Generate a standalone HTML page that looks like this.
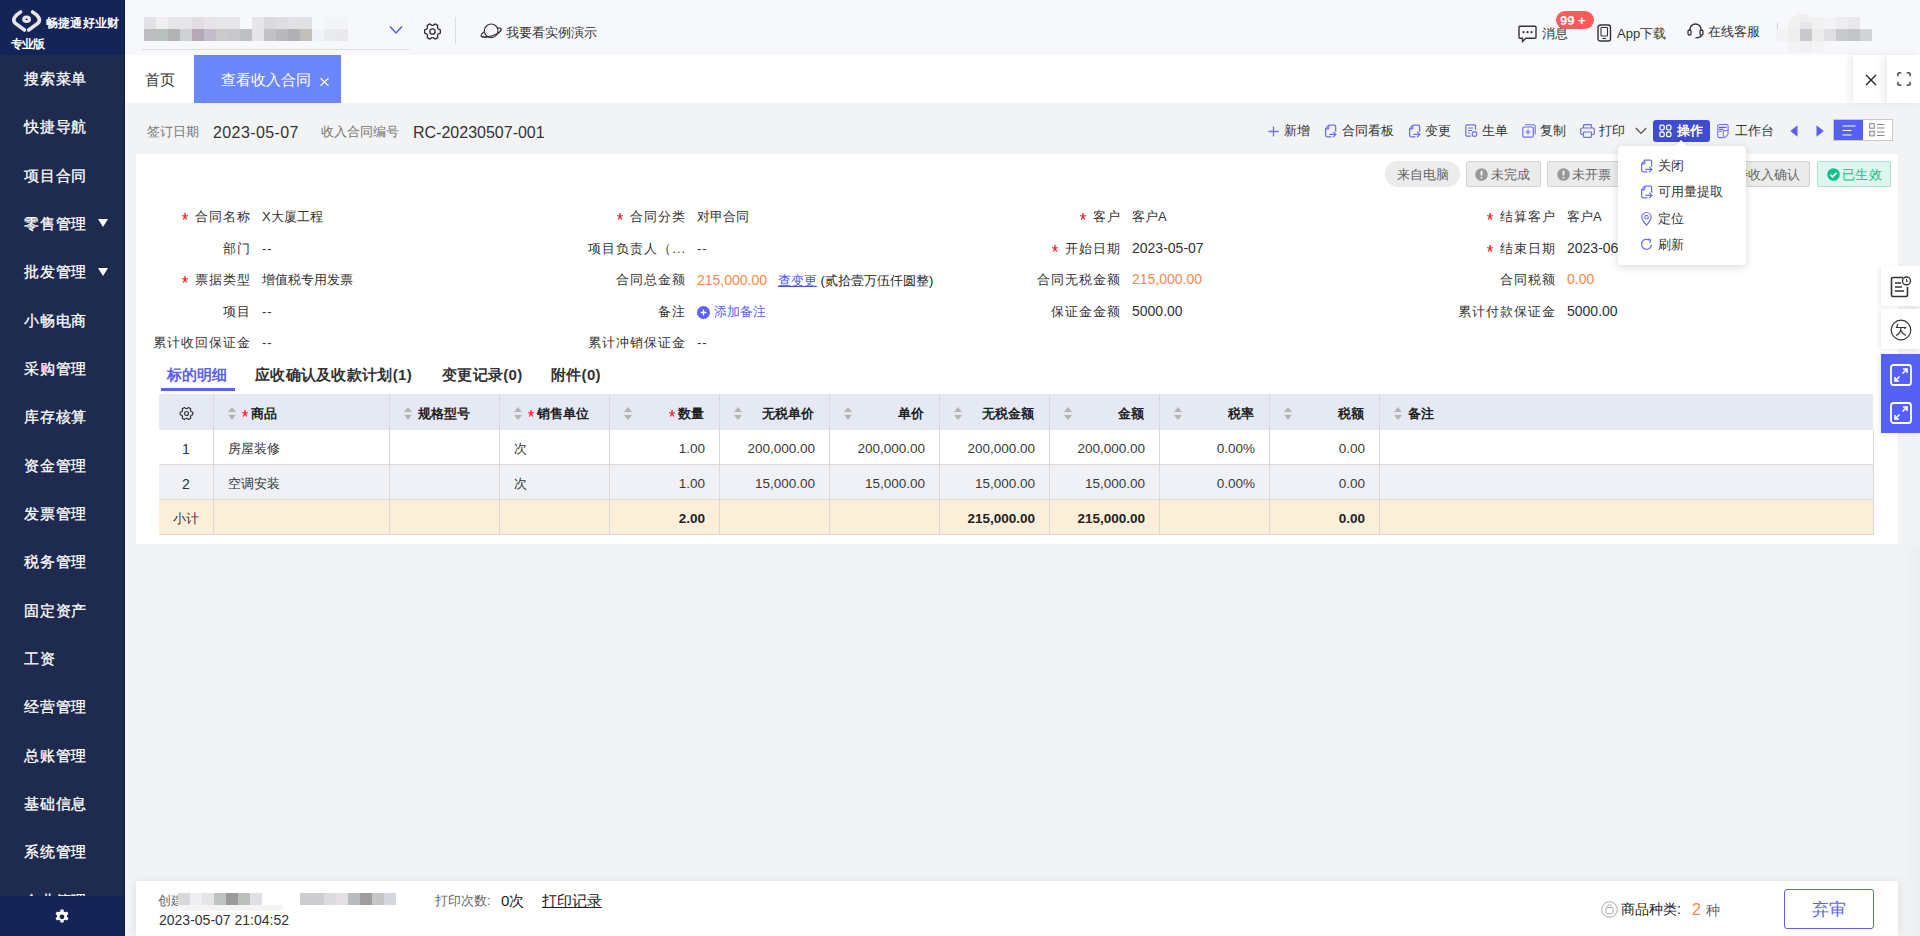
<!DOCTYPE html><html><head><meta charset="utf-8"><style>
*{box-sizing:border-box;margin:0;padding:0}
html,body{width:1920px;height:936px;overflow:hidden;background:#f2f3f5;font-family:"Liberation Sans",sans-serif;color:#333;font-size:13px}
.a{position:absolute;white-space:nowrap;line-height:1}
svg{position:absolute;overflow:visible}
.mi{position:absolute;left:24px;color:#fff;font-size:15px;letter-spacing:0.8px;line-height:1;white-space:nowrap;-webkit-text-stroke:0.3px #fff}
.tri{position:absolute;left:98px;width:0;height:0;border-left:5.5px solid transparent;border-right:5.5px solid transparent;border-top:8px solid #fff}
.lbl{position:absolute;font-size:13px;letter-spacing:1px;color:#333;line-height:1;white-space:nowrap;text-align:right}
.val{position:absolute;font-size:13px;color:#333;line-height:1;white-space:nowrap}
.num{font-size:14px}
.req{color:#f5222d;letter-spacing:0}
.blue{color:#5b5ff2}
.org{color:#f7874d}
.th{position:absolute;font-size:13px;font-weight:bold;color:#222;line-height:1;white-space:nowrap}
.td{position:absolute;font-size:13px;color:#333;line-height:1;white-space:nowrap}
.tn{position:absolute;font-size:13.5px;color:#3a3a3a;line-height:1;white-space:nowrap;text-align:right}
.vl{position:absolute;width:1px;background:#d9d9d9}
.hl{position:absolute;height:1px;background:#d9d9d9}
.sort{position:absolute;width:8px;height:13px}
.sort:before{content:"";position:absolute;left:0;top:0;border-left:4px solid transparent;border-right:4px solid transparent;border-bottom:5px solid #b4b4b4}
.sort:after{content:"";position:absolute;left:0;top:8px;border-left:4px solid transparent;border-right:4px solid transparent;border-top:5px solid #b4b4b4}
.tb{position:absolute;font-size:13px;color:#333;line-height:1;white-space:nowrap}
.tag{position:absolute;height:26px;line-height:26px;font-size:13px;color:#666;white-space:nowrap}
.dd{position:absolute;font-size:13px;color:#333;line-height:1;white-space:nowrap}
</style></head><body>
<div class="a" style="left:0;top:0;width:125px;height:936px;background:#1e2a4e;overflow:hidden">
<div class="a" style="left:0;top:0;width:125px;height:55px;background:#152456"></div>
<svg style="left:0;top:0" width="50" height="40" viewBox="0 0 50 40">
<path d="M20.6 12 C15 15.5 11.5 19.5 15.5 23.5 L24.5 30" fill="none" stroke="#e6e6ea" stroke-width="3.6" stroke-linecap="round"/>
<path d="M32.6 12 C38.2 15.5 41.7 19.5 37.7 23.5 L28.7 30" fill="none" stroke="#e6e6ea" stroke-width="3.6" stroke-linecap="round"/>
<ellipse cx="26.6" cy="19.2" rx="4.4" ry="3.8" fill="#e6e6ea"/><ellipse cx="26.6" cy="19.2" rx="1.3" ry="0.8" fill="#152456"/>
</svg>
<div class="a" style="left:46px;top:17px;font-size:12px;color:#fff;font-weight:bold;letter-spacing:0.2px">畅捷通好业财</div>
<div class="a" style="left:11px;top:38px;font-size:12px;color:#fff;font-weight:bold;letter-spacing:-1.2px">专业版</div>
<div class="mi" style="top:71px">搜索菜单</div>
<div class="mi" style="top:119px">快捷导航</div>
<div class="mi" style="top:168px">项目合同</div>
<div class="mi" style="top:216px">零售管理</div>
<div class="tri" style="top:219px"></div>
<div class="mi" style="top:264px">批发管理</div>
<div class="tri" style="top:268px"></div>
<div class="mi" style="top:313px">小畅电商</div>
<div class="mi" style="top:361px">采购管理</div>
<div class="mi" style="top:409px">库存核算</div>
<div class="mi" style="top:458px">资金管理</div>
<div class="mi" style="top:506px">发票管理</div>
<div class="mi" style="top:554px">税务管理</div>
<div class="mi" style="top:603px">固定资产</div>
<div class="mi" style="top:651px">工资</div>
<div class="mi" style="top:699px">经营管理</div>
<div class="mi" style="top:748px">总账管理</div>
<div class="mi" style="top:796px">基础信息</div>
<div class="mi" style="top:844px">系统管理</div>
<div class="mi" style="top:893px">企业管理</div>
<div class="a" style="left:0;top:896px;width:125px;height:40px;background:#152456"></div>
<svg style="left:54px;top:909px" width="16" height="16" viewBox="0 0 16 16">
<path fill="#fff" d="M6.6 0.5h2.8l0.4 2.1 1.3 0.7 2-0.8 1.4 2.4-1.6 1.4v1.5l1.6 1.4-1.4 2.4-2-0.8-1.3 0.7-0.4 2.1H6.6l-0.4-2.1-1.3-0.7-2 0.8-1.4-2.4 1.6-1.4V6.3L1.5 4.9l1.4-2.4 2 0.8 1.3-0.7z"/>
<circle cx="8" cy="7.8" r="2.4" fill="#152456"/></svg>
</div>
<div class="a" style="left:124px;top:0;width:1px;height:936px;background:#0f1a3a"></div>
<div class="a" style="left:125px;top:0;width:1795px;height:55px;background:#f7f8fc"></div>
<div class="a" style="left:144px;top:17px;width:12px;height:12px;background:#e2e2e5"></div>
<div class="a" style="left:156px;top:17px;width:12px;height:12px;background:#efeff2"></div>
<div class="a" style="left:168px;top:17px;width:12px;height:12px;background:#e6e6e8"></div>
<div class="a" style="left:180px;top:17px;width:12px;height:12px;background:#e6e6e8"></div>
<div class="a" style="left:192px;top:17px;width:12px;height:12px;background:#e2dde4"></div>
<div class="a" style="left:204px;top:17px;width:12px;height:12px;background:#e6e4e9"></div>
<div class="a" style="left:216px;top:17px;width:12px;height:12px;background:#e7e7e9"></div>
<div class="a" style="left:228px;top:17px;width:12px;height:12px;background:#e7e7ea"></div>
<div class="a" style="left:252px;top:17px;width:12px;height:12px;background:#e6e6e8"></div>
<div class="a" style="left:264px;top:17px;width:12px;height:12px;background:#dadadc"></div>
<div class="a" style="left:276px;top:17px;width:12px;height:12px;background:#dedee1"></div>
<div class="a" style="left:288px;top:17px;width:12px;height:12px;background:#e2e1e4"></div>
<div class="a" style="left:300px;top:17px;width:12px;height:12px;background:#e0e1e2"></div>
<div class="a" style="left:324px;top:17px;width:12px;height:12px;background:#f3f4f7"></div>
<div class="a" style="left:336px;top:17px;width:12px;height:12px;background:#f3f4f7"></div>
<div class="a" style="left:144px;top:29px;width:12px;height:12px;background:#bdbdbf"></div>
<div class="a" style="left:156px;top:29px;width:12px;height:12px;background:#b8bfbd"></div>
<div class="a" style="left:168px;top:29px;width:12px;height:12px;background:#b3b3b3"></div>
<div class="a" style="left:180px;top:29px;width:12px;height:12px;background:#cdd1d3"></div>
<div class="a" style="left:192px;top:29px;width:12px;height:12px;background:#b5a9b6"></div>
<div class="a" style="left:204px;top:29px;width:12px;height:12px;background:#c2bccb"></div>
<div class="a" style="left:216px;top:29px;width:12px;height:12px;background:#cbcbcb"></div>
<div class="a" style="left:228px;top:29px;width:12px;height:12px;background:#c9c9cd"></div>
<div class="a" style="left:240px;top:29px;width:12px;height:12px;background:#bfc0c3"></div>
<div class="a" style="left:252px;top:29px;width:12px;height:12px;background:#e6e6e8"></div>
<div class="a" style="left:264px;top:29px;width:12px;height:12px;background:#c2c2c4"></div>
<div class="a" style="left:276px;top:29px;width:12px;height:12px;background:#b9b8bd"></div>
<div class="a" style="left:288px;top:29px;width:12px;height:12px;background:#b0b0b5"></div>
<div class="a" style="left:300px;top:29px;width:12px;height:12px;background:#c2c0bb"></div>
<div class="a" style="left:312px;top:29px;width:12px;height:12px;background:#f0f3fa"></div>
<div class="a" style="left:324px;top:29px;width:12px;height:12px;background:#e9ebed"></div>
<div class="a" style="left:336px;top:29px;width:12px;height:12px;background:#e9e9ec"></div>
<div class="a" style="left:142px;top:49px;width:267px;height:1px;background:#dcdde2"></div>
<svg style="left:389px;top:25px" width="14" height="10" viewBox="0 0 14 10"><path d="M1 1.5 L7 8 L13 1.5" fill="none" stroke="#4f5bf0" stroke-width="1.4"/></svg>
<svg style="left:423px;top:22px" width="19" height="19" viewBox="0 0 19 19"><path fill="none" stroke="#333" stroke-width="1.35" stroke-linejoin="round" d="M15.16 6.98 L17.35 7.97 L17.35 11.03 L15.16 12.02 L14.52 13.14 L14.75 15.54 L12.10 17.06 L10.15 15.67 L8.85 15.67 L6.90 17.06 L4.25 15.54 L4.48 13.14 L3.84 12.02 L1.65 11.03 L1.65 7.97 L3.84 6.98 L4.48 5.86 L4.25 3.46 L6.90 1.94 L8.85 3.33 L10.15 3.33 L12.10 1.94 L14.75 3.46 L14.52 5.86Z"/><circle cx="9.5" cy="9.5" r="2.7" fill="none" stroke="#333" stroke-width="1.3"/></svg>
<div class="a" style="left:455px;top:17px;width:1px;height:27px;background:#dcdde2"></div>
<svg style="left:475px;top:18px" width="30" height="26" viewBox="0 0 30 26"><g transform="rotate(-18 16 14)"><ellipse cx="16" cy="14.5" rx="10.6" ry="3.4" fill="none" stroke="#333" stroke-width="1.1"/></g><circle cx="16.2" cy="12.8" r="6.8" fill="#f7f8fc" stroke="#333" stroke-width="1.1"/><g transform="rotate(-18 16 14)"><path d="M5.4 14.5A10.6 3.4 0 0 0 26.6 14.5" fill="none" stroke="#333" stroke-width="1.1"/></g></svg>
<div class="a" style="left:506px;top:26px;font-size:13px;color:#333">我要看实例演示</div>
<svg style="left:1518px;top:25px" width="19" height="18" viewBox="0 0 19 18"><path d="M2 1.2h15a1 1 0 0 1 1 1v10a1 1 0 0 1-1 1H8l-3.5 3.3v-3.3H2a1 1 0 0 1-1-1v-10a1 1 0 0 1 1-1z" fill="none" stroke="#333" stroke-width="1.4"/><circle cx="5.5" cy="7.2" r="1.1" fill="#333"/><circle cx="9.5" cy="7.2" r="1.1" fill="#333"/><circle cx="13.5" cy="7.2" r="1.1" fill="#333"/></svg>
<div class="a" style="left:1542px;top:27px;font-size:13px;color:#333">消息</div>
<div class="a" style="left:1556px;top:11px;width:38px;height:18px;border-radius:9px;background:#fd5a5a;color:#fff;font-size:13px;font-weight:bold;line-height:19px;padding-left:4px">99 +</div>
<svg style="left:1597px;top:24px" width="15" height="18" viewBox="0 0 15 18"><rect x="1" y="1" width="12.5" height="16" rx="2.2" fill="none" stroke="#333" stroke-width="1.4"/><rect x="4" y="3.5" width="6.5" height="8.5" rx="0.8" fill="none" stroke="#333" stroke-width="1.1"/><path d="M5.5 14.5h3.5" stroke="#333" stroke-width="1.1"/></svg>
<div class="a" style="left:1617px;top:27px;font-size:13px;color:#333">App下载</div>
<svg style="left:1687px;top:22px" width="17" height="17" viewBox="0 0 17 17"><path d="M3 9 V7.5 a5.5 5.5 0 0 1 11 0 V9" fill="none" stroke="#333" stroke-width="1.4"/><rect x="1" y="8" width="3" height="5" rx="1.3" fill="none" stroke="#333" stroke-width="1.3"/><rect x="13" y="8" width="3" height="5" rx="1.3" fill="none" stroke="#333" stroke-width="1.3"/><path d="M14.5 13 C14 15.5 11 15.8 8.5 15.8" fill="none" stroke="#333" stroke-width="1.3"/></svg>
<div class="a" style="left:1708px;top:25px;font-size:13px;color:#333">在线客服</div>
<div class="a" style="left:1777px;top:23px;width:1px;height:10px;background:#cfcfd3"></div>
<div class="a" style="left:1788px;top:14px;width:28px;height:28px;border-radius:14px;background:#f0f0f1"></div>
<div class="a" style="left:1800px;top:22px;width:12px;height:7px;background:#e6e6e8"></div>
<div class="a" style="left:1812px;top:17px;width:12px;height:12px;background:#f1f1f2"></div>
<div class="a" style="left:1824px;top:17px;width:12px;height:12px;background:#f3f3f5"></div>
<div class="a" style="left:1836px;top:17px;width:12px;height:12px;background:#eeeef0"></div>
<div class="a" style="left:1848px;top:17px;width:12px;height:12px;background:#e8e8eb"></div>
<div class="a" style="left:1776px;top:29px;width:12px;height:12px;background:#f3f3f5"></div>
<div class="a" style="left:1788px;top:29px;width:12px;height:12px;background:#eeeeee"></div>
<div class="a" style="left:1800px;top:29px;width:12px;height:12px;background:#c9c9cb"></div>
<div class="a" style="left:1812px;top:29px;width:12px;height:12px;background:#ececec"></div>
<div class="a" style="left:1824px;top:29px;width:12px;height:12px;background:#e0e0e2"></div>
<div class="a" style="left:1836px;top:29px;width:12px;height:12px;background:#c8c9cd"></div>
<div class="a" style="left:1848px;top:29px;width:12px;height:12px;background:#c4c5c9"></div>
<div class="a" style="left:1860px;top:29px;width:12px;height:12px;background:#d2d3d6"></div>
<div class="a" style="left:1788px;top:41px;width:12px;height:12px;background:#f3f3f5"></div>
<div class="a" style="left:1800px;top:41px;width:12px;height:12px;background:#f1f1f3"></div>
<div class="a" style="left:1812px;top:41px;width:12px;height:12px;background:#f4f4f6"></div>
<div class="a" style="left:125px;top:55px;width:1795px;height:48px;background:#fff"></div>
<div class="a" style="left:145px;top:72px;font-size:15px;color:#333">首页</div>
<div class="a" style="left:194px;top:55px;width:147px;height:48px;background:#6c87fb"></div>
<div class="a" style="left:221px;top:72px;font-size:15px;color:#fff">查看收入合同</div>
<svg style="left:320px;top:78px" width="9" height="8" viewBox="0 0 9 8"><path d="M0.5 0.3 L8.5 7.7 M8.5 0.3 L0.5 7.7" stroke="#fff" stroke-width="1.2"/></svg>
<div class="a" style="left:1853px;top:55px;width:33px;height:48px;background:#fff;box-shadow:-4px 0 7px rgba(0,0,0,0.07)"></div>
<div class="a" style="left:1887px;top:55px;width:33px;height:48px;background:#fff;box-shadow:-4px 0 7px rgba(0,0,0,0.07)"></div>
<svg style="left:1865px;top:74px" width="12" height="12" viewBox="0 0 12 12"><path d="M1 1 L11 11 M11 1 L1 11" stroke="#222" stroke-width="1.4"/></svg>
<svg style="left:1897px;top:72px" width="14" height="14" viewBox="0 0 14 14"><path d="M0.9 4.3V1.8A0.9 0.9 0 0 1 1.8 0.9H4.3M9.7 0.9H12.2A0.9 0.9 0 0 1 13.1 1.8V4.3M13.1 9.7V12.2A0.9 0.9 0 0 1 12.2 13.1H9.7M4.3 13.1H1.8A0.9 0.9 0 0 1 0.9 12.2V9.7" fill="none" stroke="#222" stroke-width="1.25"/></svg>
<div class="a" style="left:147px;top:125px;font-size:13px;color:#777">签订日期</div>
<div class="a" style="left:213px;top:125px;font-size:16px;color:#333;letter-spacing:0.4px">2023-05-07</div>
<div class="a" style="left:321px;top:125px;font-size:13px;color:#777">收入合同编号</div>
<div class="a" style="left:413px;top:125px;font-size:16px;color:#333">RC-20230507-001</div>
<svg style="left:1268px;top:126px" width="11" height="11" viewBox="0 0 11 11"><path d="M5.5 0.5v10M0.5 5.5h10" stroke="#6a6ff5" stroke-width="1.3"/></svg>
<div class="tb" style="left:1284px;top:124px">新增</div>
<svg style="left:1325px;top:124px" width="13" height="14" viewBox="0 0 13 14"><path d="M6 12.8H2.3A1.8 1.8 0 0 1 0.6 11V5L3.8 1.2H9.3A1.3 1.3 0 0 1 10.6 2.5V7.2" fill="none" stroke="#6a6ff5" stroke-width="1.3" stroke-linecap="round" stroke-linejoin="round"/><path d="M0.8 4.9H3.3A0.6 0.6 0 0 0 3.9 4.3V1.4" fill="none" stroke="#6a6ff5" stroke-width="1.1"/><path d="M4.8 10.4H10.9M8.5 8.1L10.9 10.4L8.5 12.7" fill="none" stroke="#6a6ff5" stroke-width="1.3" stroke-linecap="round" stroke-linejoin="round"/></svg>
<div class="tb" style="left:1342px;top:124px">合同看板</div>
<svg style="left:1409px;top:124px" width="13" height="14" viewBox="0 0 13 14"><path d="M6 12.8H2.3A1.8 1.8 0 0 1 0.6 11V5L3.8 1.2H9.3A1.3 1.3 0 0 1 10.6 2.5V7.2" fill="none" stroke="#6a6ff5" stroke-width="1.3" stroke-linecap="round" stroke-linejoin="round"/><path d="M0.8 4.9H3.3A0.6 0.6 0 0 0 3.9 4.3V1.4" fill="none" stroke="#6a6ff5" stroke-width="1.1"/><path d="M4.8 10.4H10.9M8.5 8.1L10.9 10.4L8.5 12.7" fill="none" stroke="#6a6ff5" stroke-width="1.3" stroke-linecap="round" stroke-linejoin="round"/></svg>
<div class="tb" style="left:1425px;top:124px">变更</div>
<svg style="left:1465px;top:124px" width="13" height="13" viewBox="0 0 13 13"><path d="M10.5 6V2a1.2 1.2 0 0 0-1.2-1.2H2A1.2 1.2 0 0 0 0.8 2v9A1.2 1.2 0 0 0 2 12.2h4" fill="none" stroke="#6a6ff5" stroke-width="1.2"/><path d="M3 4h5M3 6.5h4M3 9h2" stroke="#6a6ff5" stroke-width="1.1"/><circle cx="9.5" cy="10" r="2.4" fill="none" stroke="#6a6ff5" stroke-width="1.1"/></svg>
<div class="tb" style="left:1482px;top:124px">生单</div>
<svg style="left:1522px;top:124px" width="14" height="14" viewBox="0 0 14 14"><path d="M3 0.8h8.5a1.7 1.7 0 0 1 1.7 1.7v8" fill="none" stroke="#6a6ff5" stroke-width="1.1"/><rect x="0.8" y="3" width="10.5" height="10.2" rx="1.5" fill="none" stroke="#6a6ff5" stroke-width="1.2"/><path d="M6 5.5v5M3.5 8h5" stroke="#6a6ff5" stroke-width="1.2"/></svg>
<div class="tb" style="left:1540px;top:124px">复制</div>
<svg style="left:1580px;top:124px" width="15" height="14" viewBox="0 0 15 14"><path d="M3.5 4V1.5a0.8 0.8 0 0 1 0.8-0.8h6.4a0.8 0.8 0 0 1 0.8 0.8V4" fill="none" stroke="#6a6ff5" stroke-width="1.2"/><path d="M3.5 10.5H2a1.3 1.3 0 0 1-1.3-1.3V5.3A1.3 1.3 0 0 1 2 4h11a1.3 1.3 0 0 1 1.3 1.3v3.9a1.3 1.3 0 0 1-1.3 1.3h-1.5" fill="none" stroke="#6a6ff5" stroke-width="1.2"/><rect x="3.5" y="8" width="8" height="5.3" rx="0.8" fill="none" stroke="#6a6ff5" stroke-width="1.2"/></svg>
<div class="tb" style="left:1599px;top:124px">打印</div>
<svg style="left:1635px;top:127px" width="12" height="8" viewBox="0 0 12 8"><path d="M0.8 1L6 6.5L11.2 1" fill="none" stroke="#555" stroke-width="1.2"/></svg>
<div class="a" style="left:1653px;top:120px;width:57px;height:22px;background:#3f4ccb;border-radius:3px"></div>
<svg style="left:1659px;top:124px" width="13" height="14" viewBox="0 0 13 14"><rect x="0.9" y="1.2" width="4.3" height="4.6" rx="1.4" fill="none" stroke="#fff" stroke-width="1.3"/><rect x="7.6" y="1.2" width="4.3" height="4.6" rx="1.4" fill="none" stroke="#fff" stroke-width="1.3"/><rect x="0.9" y="8" width="4.3" height="4.6" rx="1.4" fill="none" stroke="#fff" stroke-width="1.3"/><rect x="7.6" y="8" width="4.3" height="4.6" rx="1.4" fill="none" stroke="#fff" stroke-width="1.3"/></svg>
<div class="tb" style="left:1677px;top:124px;color:#fff;font-weight:bold">操作</div>
<svg style="left:1717px;top:124px" width="13" height="15" viewBox="0 0 13 15"><path d="M6.5 13.6H2.3A1.5 1.5 0 0 1 0.8 12.1V2A1.5 1.5 0 0 1 2.3 0.5H9.6A1.5 1.5 0 0 1 11.1 2V6.4" fill="none" stroke="#7b6cf2" stroke-width="1.15"/><path d="M2.5 3.4H9M2.5 5.4H6M2.5 7.3H4.3" stroke="#5d5cf5" stroke-width="1.1" stroke-linecap="round"/><path d="M6.3 6.6H11.1V9.2Q11.1 11.6 7.6 13.6Q6.3 13.6 6.3 12.2Z" fill="none" stroke="#8a7cf4" stroke-width="1.1" stroke-linejoin="round"/></svg>
<div class="tb" style="left:1735px;top:124px">工作台</div>
<svg style="left:1790px;top:125px" width="8" height="12" viewBox="0 0 8 12"><path d="M7.5 0.3V11.7L0.3 6z" fill="#5a5ff5"/></svg>
<svg style="left:1816px;top:125px" width="8" height="12" viewBox="0 0 8 12"><path d="M0.5 0.3V11.7L7.7 6z" fill="#5a5ff5"/></svg>
<div class="a" style="left:1833px;top:119px;width:60px;height:22px;border:1px solid #c8c8cc;background:#fff"></div>
<div class="a" style="left:1834px;top:120px;width:29px;height:20px;background:#5460f7"></div>
<svg style="left:1842px;top:125px" width="14" height="11" viewBox="0 0 14 11"><path d="M0.5 1h13M0.5 5.5h9M0.5 10h9" stroke="#fff" stroke-width="1.2"/></svg>
<svg style="left:1869px;top:123px" width="16" height="14" viewBox="0 0 16 14"><rect x="0.7" y="0.7" width="4.5" height="4.5" fill="none" stroke="#888" stroke-width="1.1"/><rect x="0.7" y="8.3" width="4.5" height="4.5" fill="none" stroke="#888" stroke-width="1.1"/><path d="M8 1.5h7.5M8 5h7.5M8 9h7.5M8 12.5h7.5" stroke="#888" stroke-width="1.1"/></svg>
<div class="a" style="left:136px;top:154px;width:1762px;height:390px;background:#fff"></div>
<div class="tag" style="left:1385px;top:161px;line-height:28px;width:75px;border-radius:13px;background:#ececec;text-align:center;color:#666">来自电脑</div>
<div class="a" style="left:1466px;top:161px;width:75px;height:26px;background:#ebebeb;border:1px solid #d3d3d3;border-radius:2px"></div>
<svg style="left:1475px;top:168px" width="13" height="13" viewBox="0 0 13 13"><circle cx="6.5" cy="6.5" r="6.3" fill="#999"/><path d="M6.5 2.8v4.6" stroke="#fff" stroke-width="1.7"/><circle cx="6.5" cy="9.6" r="0.9" fill="#fff"/></svg>
<div class="tb" style="left:1491px;top:168px;color:#666">未完成</div>
<div class="a" style="left:1547px;top:161px;width:75px;height:26px;background:#ebebeb;border:1px solid #d3d3d3;border-radius:2px"></div>
<svg style="left:1557px;top:168px" width="13" height="13" viewBox="0 0 13 13"><circle cx="6.5" cy="6.5" r="6.3" fill="#999"/><path d="M6.5 2.8v4.6" stroke="#fff" stroke-width="1.7"/><circle cx="6.5" cy="9.6" r="0.9" fill="#fff"/></svg>
<div class="tb" style="left:1572px;top:168px;color:#666">未开票</div>
<div class="a" style="left:1710px;top:161px;width:100px;height:26px;background:#ebebeb;border:1px solid #d3d3d3;border-radius:2px"></div>
<div class="tb" style="left:1735px;top:168px;color:#666">待收入确认</div>
<div class="a" style="left:1817px;top:161px;width:74px;height:26px;background:#ddf6ee;border:1px solid #a9e6cf;border-radius:2px"></div>
<svg style="left:1827px;top:168px" width="13" height="13" viewBox="0 0 13 13"><circle cx="6.5" cy="6.5" r="6.3" fill="#19be8c"/><path d="M3.4 6.6l2.2 2.2 4-4" fill="none" stroke="#fff" stroke-width="1.7"/></svg>
<div class="tb" style="left:1842px;top:168px;color:#12bf8a;letter-spacing:0.4px">已生效</div>
<div class="lbl" style="left:51px;top:210px;width:200px"><svg style="position:relative;display:inline-block;vertical-align:top;margin-top:3px;margin-right:7px" width="6" height="7" viewBox="0 0 6 7"><path d="M3 0V3.5M3 3.5L0.1 2.5M3 3.5L5.9 2.5M3 3.5L1.2 6.5M3 3.5L4.8 6.5" stroke="#f5222d" stroke-width="1.3"/></svg>合同名称</div>
<div class="val " style="left:262px;top:210px">X大厦工程</div>
<div class="lbl" style="left:486px;top:210px;width:200px"><svg style="position:relative;display:inline-block;vertical-align:top;margin-top:3px;margin-right:7px" width="6" height="7" viewBox="0 0 6 7"><path d="M3 0V3.5M3 3.5L0.1 2.5M3 3.5L5.9 2.5M3 3.5L1.2 6.5M3 3.5L4.8 6.5" stroke="#f5222d" stroke-width="1.3"/></svg>合同分类</div>
<div class="val " style="left:697px;top:210px">对甲合同</div>
<div class="lbl" style="left:921px;top:210px;width:200px"><svg style="position:relative;display:inline-block;vertical-align:top;margin-top:3px;margin-right:7px" width="6" height="7" viewBox="0 0 6 7"><path d="M3 0V3.5M3 3.5L0.1 2.5M3 3.5L5.9 2.5M3 3.5L1.2 6.5M3 3.5L4.8 6.5" stroke="#f5222d" stroke-width="1.3"/></svg>客户</div>
<div class="val " style="left:1132px;top:210px">客户A</div>
<div class="lbl" style="left:1356px;top:210px;width:200px"><svg style="position:relative;display:inline-block;vertical-align:top;margin-top:3px;margin-right:7px" width="6" height="7" viewBox="0 0 6 7"><path d="M3 0V3.5M3 3.5L0.1 2.5M3 3.5L5.9 2.5M3 3.5L1.2 6.5M3 3.5L4.8 6.5" stroke="#f5222d" stroke-width="1.3"/></svg>结算客户</div>
<div class="val " style="left:1567px;top:210px">客户A</div>
<div class="lbl" style="left:51px;top:241.5px;width:200px">部门</div>
<div class="val " style="left:262px;top:241.5px;letter-spacing:1px">--</div>
<div class="lbl" style="left:486px;top:241.5px;width:200px">项目负责人（...</div>
<div class="val " style="left:697px;top:241.5px;letter-spacing:1px">--</div>
<div class="lbl" style="left:921px;top:241.5px;width:200px"><svg style="position:relative;display:inline-block;vertical-align:top;margin-top:3px;margin-right:7px" width="6" height="7" viewBox="0 0 6 7"><path d="M3 0V3.5M3 3.5L0.1 2.5M3 3.5L5.9 2.5M3 3.5L1.2 6.5M3 3.5L4.8 6.5" stroke="#f5222d" stroke-width="1.3"/></svg>开始日期</div>
<div class="val num" style="left:1132px;top:240.5px">2023-05-07</div>
<div class="lbl" style="left:1356px;top:241.5px;width:200px"><svg style="position:relative;display:inline-block;vertical-align:top;margin-top:3px;margin-right:7px" width="6" height="7" viewBox="0 0 6 7"><path d="M3 0V3.5M3 3.5L0.1 2.5M3 3.5L5.9 2.5M3 3.5L1.2 6.5M3 3.5L4.8 6.5" stroke="#f5222d" stroke-width="1.3"/></svg>结束日期</div>
<div class="val num" style="left:1567px;top:240.5px">2023-06-07</div>
<div class="lbl" style="left:51px;top:273px;width:200px"><svg style="position:relative;display:inline-block;vertical-align:top;margin-top:3px;margin-right:7px" width="6" height="7" viewBox="0 0 6 7"><path d="M3 0V3.5M3 3.5L0.1 2.5M3 3.5L5.9 2.5M3 3.5L1.2 6.5M3 3.5L4.8 6.5" stroke="#f5222d" stroke-width="1.3"/></svg>票据类型</div>
<div class="val " style="left:262px;top:273px">增值税专用发票</div>
<div class="lbl" style="left:486px;top:273px;width:200px">合同总金额</div>
<div class="val" style="left:697px;top:273px"><span class="num org">215,000.00</span>&nbsp;&nbsp; <span style="color:#4a55e8;text-decoration:underline">查变更</span> <span style="color:#222">(贰拾壹万伍仟圆整)</span></div>
<div class="lbl" style="left:921px;top:273px;width:200px">合同无税金额</div>
<div class="val num org" style="left:1132px;top:272px">215,000.00</div>
<div class="lbl" style="left:1356px;top:273px;width:200px">合同税额</div>
<div class="val num org" style="left:1567px;top:272px">0.00</div>
<div class="lbl" style="left:51px;top:304.5px;width:200px">项目</div>
<div class="val " style="left:262px;top:304.5px;letter-spacing:1px">--</div>
<div class="lbl" style="left:486px;top:304.5px;width:200px">备注</div>
<svg style="left:697px;top:305.5px" width="13" height="13" viewBox="0 0 13 13"><circle cx="6.5" cy="6.5" r="6.5" fill="#5b5ff2"/><path d="M6.5 3.5v6M3.5 6.5h6" stroke="#fff" stroke-width="1.3"/></svg>
<div class="val blue" style="left:714px;top:304.5px">添加备注</div>
<div class="lbl" style="left:921px;top:304.5px;width:200px">保证金金额</div>
<div class="val num" style="left:1132px;top:303.5px">5000.00</div>
<div class="lbl" style="left:1356px;top:304.5px;width:200px">累计付款保证金</div>
<div class="val num" style="left:1567px;top:303.5px">5000.00</div>
<div class="lbl" style="left:51px;top:336px;width:200px">累计收回保证金</div>
<div class="val " style="left:262px;top:336px;letter-spacing:1px">--</div>
<div class="lbl" style="left:486px;top:336px;width:200px">累计冲销保证金</div>
<div class="val " style="left:697px;top:336px;letter-spacing:1px">--</div>
<div class="a" style="left:167px;top:367px;font-size:15px;font-weight:bold;color:#5b5ff2">标的明细</div>
<div class="a" style="left:161px;top:388px;width:74px;height:3px;background:#5b5ff2"></div>
<div class="a" style="left:255px;top:367px;font-size:15px;font-weight:bold;color:#333;letter-spacing:0.3px">应收确认及收款计划(1)</div>
<div class="a" style="left:442px;top:367px;font-size:15px;font-weight:bold;color:#333;letter-spacing:0.3px">变更记录(0)</div>
<div class="a" style="left:551px;top:367px;font-size:15px;font-weight:bold;color:#333;letter-spacing:0.3px">附件(0)</div>
<div class="a" style="left:159px;top:394px;width:1714px;height:36px;background:#e5e9f4"></div>
<div class="a" style="left:159px;top:430px;width:1714px;height:35px;background:#fff"></div>
<div class="a" style="left:159px;top:465px;width:1714px;height:35px;background:#eff1f7"></div>
<div class="a" style="left:159px;top:500px;width:1714px;height:35px;background:#fcefda"></div>
<div class="hl" style="left:159px;top:464px;width:1714px"></div>
<div class="hl" style="left:159px;top:499px;width:1714px"></div>
<div class="hl" style="left:159px;top:534px;width:1714px"></div>
<div class="vl" style="left:213px;top:394px;height:141px"></div>
<div class="vl" style="left:389px;top:394px;height:141px"></div>
<div class="vl" style="left:499px;top:394px;height:141px"></div>
<div class="vl" style="left:609px;top:394px;height:141px"></div>
<div class="vl" style="left:719px;top:394px;height:141px"></div>
<div class="vl" style="left:829px;top:394px;height:141px"></div>
<div class="vl" style="left:939px;top:394px;height:141px"></div>
<div class="vl" style="left:1049px;top:394px;height:141px"></div>
<div class="vl" style="left:1159px;top:394px;height:141px"></div>
<div class="vl" style="left:1269px;top:394px;height:141px"></div>
<div class="vl" style="left:1379px;top:394px;height:141px"></div>
<div class="vl" style="left:1873px;top:430px;height:105px"></div>
<svg style="left:179px;top:406px" width="15" height="15" viewBox="0 0 15 15"><path fill="none" stroke="#333" stroke-width="1.2" stroke-linejoin="round" d="M11.98 5.51 L13.78 6.28 L13.78 8.72 L11.98 9.49 L11.46 10.38 L11.70 12.33 L9.58 13.55 L8.01 12.37 L6.99 12.37 L5.42 13.55 L3.30 12.33 L3.54 10.38 L3.02 9.49 L1.22 8.72 L1.22 6.28 L3.02 5.51 L3.54 4.62 L3.30 2.67 L5.42 1.45 L6.99 2.63 L8.01 2.63 L9.58 1.45 L11.70 2.67 L11.46 4.62Z"/><circle cx="7.5" cy="7.5" r="2" fill="none" stroke="#333" stroke-width="1.2"/></svg>
<div class="sort" style="left:228px;top:407px"></div>
<div class="th" style="left:242px;top:407px"><svg style="position:relative;display:inline-block;vertical-align:top;margin-top:3px;margin-right:3px" width="6" height="7" viewBox="0 0 6 7"><path d="M3 0V3.5M3 3.5L0.1 2.5M3 3.5L5.9 2.5M3 3.5L1.2 6.5M3 3.5L4.8 6.5" stroke="#f5222d" stroke-width="1.3"/></svg>商品</div>
<div class="sort" style="left:404px;top:407px"></div>
<div class="th" style="left:418px;top:407px">规格型号</div>
<div class="sort" style="left:514px;top:407px"></div>
<div class="th" style="left:528px;top:407px"><svg style="position:relative;display:inline-block;vertical-align:top;margin-top:3px;margin-right:3px" width="6" height="7" viewBox="0 0 6 7"><path d="M3 0V3.5M3 3.5L0.1 2.5M3 3.5L5.9 2.5M3 3.5L1.2 6.5M3 3.5L4.8 6.5" stroke="#f5222d" stroke-width="1.3"/></svg>销售单位</div>
<div class="sort" style="left:624px;top:407px"></div>
<div class="th" style="left:504px;top:407px;width:200px;text-align:right"><svg style="position:relative;display:inline-block;vertical-align:top;margin-top:3px;margin-right:3px" width="6" height="7" viewBox="0 0 6 7"><path d="M3 0V3.5M3 3.5L0.1 2.5M3 3.5L5.9 2.5M3 3.5L1.2 6.5M3 3.5L4.8 6.5" stroke="#f5222d" stroke-width="1.3"/></svg>数量</div>
<div class="sort" style="left:734px;top:407px"></div>
<div class="th" style="left:614px;top:407px;width:200px;text-align:right">无税单价</div>
<div class="sort" style="left:844px;top:407px"></div>
<div class="th" style="left:724px;top:407px;width:200px;text-align:right">单价</div>
<div class="sort" style="left:954px;top:407px"></div>
<div class="th" style="left:834px;top:407px;width:200px;text-align:right">无税金额</div>
<div class="sort" style="left:1064px;top:407px"></div>
<div class="th" style="left:944px;top:407px;width:200px;text-align:right">金额</div>
<div class="sort" style="left:1174px;top:407px"></div>
<div class="th" style="left:1054px;top:407px;width:200px;text-align:right">税率</div>
<div class="sort" style="left:1284px;top:407px"></div>
<div class="th" style="left:1164px;top:407px;width:200px;text-align:right">税额</div>
<div class="sort" style="left:1394px;top:407px"></div>
<div class="th" style="left:1408px;top:407px">备注</div>
<div class="td" style="left:159px;top:442px;width:54px;text-align:center;font-size:14px">1</div>
<div class="td" style="left:228px;top:442px">房屋装修</div>
<div class="td" style="left:514px;top:442px">次</div>
<div class="tn" style="left:505px;top:442px;width:200px">1.00</div>
<div class="tn" style="left:615px;top:442px;width:200px">200,000.00</div>
<div class="tn" style="left:725px;top:442px;width:200px">200,000.00</div>
<div class="tn" style="left:835px;top:442px;width:200px">200,000.00</div>
<div class="tn" style="left:945px;top:442px;width:200px">200,000.00</div>
<div class="tn" style="left:1055px;top:442px;width:200px">0.00%</div>
<div class="tn" style="left:1165px;top:442px;width:200px">0.00</div>
<div class="td" style="left:159px;top:477px;width:54px;text-align:center;font-size:14px">2</div>
<div class="td" style="left:228px;top:477px">空调安装</div>
<div class="td" style="left:514px;top:477px">次</div>
<div class="tn" style="left:505px;top:477px;width:200px">1.00</div>
<div class="tn" style="left:615px;top:477px;width:200px">15,000.00</div>
<div class="tn" style="left:725px;top:477px;width:200px">15,000.00</div>
<div class="tn" style="left:835px;top:477px;width:200px">15,000.00</div>
<div class="tn" style="left:945px;top:477px;width:200px">15,000.00</div>
<div class="tn" style="left:1055px;top:477px;width:200px">0.00%</div>
<div class="tn" style="left:1165px;top:477px;width:200px">0.00</div>
<div class="td" style="left:159px;top:512px;width:54px;text-align:center">小计</div>
<div class="tn" style="left:505px;top:512px;width:200px;font-weight:bold;color:#222">2.00</div>
<div class="tn" style="left:835px;top:512px;width:200px;font-weight:bold;color:#222">215,000.00</div>
<div class="tn" style="left:945px;top:512px;width:200px;font-weight:bold;color:#222">215,000.00</div>
<div class="tn" style="left:1165px;top:512px;width:200px;font-weight:bold;color:#222">0.00</div>
<div class="a" style="left:1618px;top:146px;width:128px;height:119px;background:#fff;border-radius:4px;box-shadow:0 2px 8px rgba(0,0,0,0.15)"></div>
<div class="a" style="left:1676px;top:142px;width:10px;height:10px;background:#fff;transform:rotate(45deg);box-shadow:-2px -2px 3px rgba(0,0,0,0.05)"></div>
<div class="a" style="left:1671px;top:146px;width:20px;height:8px;background:#fff"></div>
<svg style="left:1641px;top:159px" width="13" height="14" viewBox="0 0 13 14"><path d="M6 12.8H2.3A1.8 1.8 0 0 1 0.6 11V5L3.8 1.2H9.3A1.3 1.3 0 0 1 10.6 2.5V7.2" fill="none" stroke="#6a6ff5" stroke-width="1.3" stroke-linecap="round" stroke-linejoin="round"/><path d="M0.8 4.9H3.3A0.6 0.6 0 0 0 3.9 4.3V1.4" fill="none" stroke="#6a6ff5" stroke-width="1.1"/><path d="M4.8 10.4H10.9M8.5 8.1L10.9 10.4L8.5 12.7" fill="none" stroke="#6a6ff5" stroke-width="1.3" stroke-linecap="round" stroke-linejoin="round"/></svg>
<div class="dd" style="left:1658px;top:159px">关闭</div>
<svg style="left:1641px;top:185px" width="13" height="14" viewBox="0 0 13 14"><path d="M6 12.8H2.3A1.8 1.8 0 0 1 0.6 11V5L3.8 1.2H9.3A1.3 1.3 0 0 1 10.6 2.5V7.2" fill="none" stroke="#6a6ff5" stroke-width="1.3" stroke-linecap="round" stroke-linejoin="round"/><path d="M0.8 4.9H3.3A0.6 0.6 0 0 0 3.9 4.3V1.4" fill="none" stroke="#6a6ff5" stroke-width="1.1"/><path d="M4.8 10.4H10.9M8.5 8.1L10.9 10.4L8.5 12.7" fill="none" stroke="#6a6ff5" stroke-width="1.3" stroke-linecap="round" stroke-linejoin="round"/></svg>
<div class="dd" style="left:1658px;top:185px">可用量提取</div>
<svg style="left:1641px;top:212px" width="11" height="14" viewBox="0 0 11 14"><path d="M5.5 13.2C2.5 9.8 0.8 7.3 0.8 5.2a4.7 4.7 0 0 1 9.4 0c0 2.1-1.7 4.6-4.7 8z" fill="none" stroke="#6a6ff5" stroke-width="1.2"/><circle cx="5.5" cy="5.2" r="1.8" fill="none" stroke="#6a6ff5" stroke-width="1.1"/></svg>
<div class="dd" style="left:1658px;top:212px">定位</div>
<svg style="left:1640px;top:238px" width="13" height="13" viewBox="0 0 13 13"><path d="M11.5 6.5A5 5 0 1 1 9.5 2.3" fill="none" stroke="#6a6ff5" stroke-width="1.3"/><path d="M8 0.8l2.8 1.3-1.2 2.8" fill="none" stroke="#6a6ff5" stroke-width="1.2"/></svg>
<div class="dd" style="left:1658px;top:238px">刷新</div>
<div class="a" style="left:1881px;top:266px;width:39px;height:40px;background:#fff;box-shadow:-2px 1px 4px rgba(0,0,0,0.08)"></div>
<div class="a" style="left:1881px;top:309px;width:39px;height:40px;background:#fff;box-shadow:-2px 1px 4px rgba(0,0,0,0.08)"></div>
<div class="a" style="left:1881px;top:354px;width:39px;height:79px;background:#5460f7;box-shadow:-2px 1px 4px rgba(0,0,0,0.08)"></div>
<svg style="left:1890px;top:276px" width="22" height="22" viewBox="0 0 22 22"><path d="M13 1.5H3a1.5 1.5 0 0 0-1.5 1.5v16A1.5 1.5 0 0 0 3 20.5h13a1.5 1.5 0 0 0 1.5-1.5V11" fill="none" stroke="#333" stroke-width="1.6"/><path d="M5 7h6M5 11h7M5 15h9" stroke="#333" stroke-width="1.6"/><circle cx="16.5" cy="5" r="4" fill="#fff" stroke="#333" stroke-width="1.4"/><path d="M16.5 3v2.2h1.6" fill="none" stroke="#333" stroke-width="1.1"/></svg>
<svg style="left:1890px;top:319px" width="22" height="22" viewBox="0 0 22 22"><circle cx="11" cy="11" r="9.8" fill="none" stroke="#333" stroke-width="1.2"/><path d="M8 5L6.5 8.5H15.5L14.5 10M11 8.5C11 12 9.5 15 6 16.5M11 11.5C12 14 13.5 15.5 16 16.5" fill="none" stroke="#333" stroke-width="1.2"/></svg>
<svg style="left:1890px;top:364px" width="22" height="22" viewBox="0 0 22 22"><rect x="1" y="1" width="20" height="20" rx="2.5" fill="none" stroke="#fff" stroke-width="1.8"/><path d="M12.5 9.5L16.5 5.5M13 5h4v4M9.5 12.5L5.5 16.5M5 13v4h4" fill="none" stroke="#fff" stroke-width="1.6"/></svg>
<svg style="left:1890px;top:402px" width="22" height="22" viewBox="0 0 22 22"><rect x="1" y="1" width="20" height="20" rx="2.5" fill="none" stroke="#fff" stroke-width="1.8"/><path d="M12.5 9.5L16.5 5.5M13 5h4v4M9.5 12.5L5.5 16.5M5 13v4h4" fill="none" stroke="#fff" stroke-width="1.6"/></svg>
<div class="a" style="left:1900px;top:545px;width:20px;height:391px;background:linear-gradient(90deg,rgba(0,0,0,0),rgba(0,0,0,0.025))"></div>
<div class="a" style="left:136px;top:881px;width:1762px;height:55px;background:#fff;box-shadow:0 0 9px rgba(0,0,0,0.09)"></div>
<div class="a" style="left:158px;top:894px;font-size:13px;color:#666">创建</div>
<div class="a" style="left:178px;top:893px;width:12px;height:12px;background:#d8d8db"></div>
<div class="a" style="left:190px;top:893px;width:12px;height:12px;background:#efeff1"></div>
<div class="a" style="left:202px;top:893px;width:12px;height:12px;background:#e4e4e6"></div>
<div class="a" style="left:214px;top:893px;width:12px;height:12px;background:#c0c2c1"></div>
<div class="a" style="left:226px;top:893px;width:12px;height:12px;background:#9a9a9a"></div>
<div class="a" style="left:238px;top:893px;width:12px;height:12px;background:#bcbebb"></div>
<div class="a" style="left:250px;top:893px;width:12px;height:12px;background:#e0e0e4"></div>
<div class="a" style="left:178px;top:905px;width:105px;height:6px;background:#f4f4f5;border-radius:0 0 8px 8px"></div>
<div class="a" style="left:300px;top:893px;width:12px;height:12px;background:#cdcdcf"></div>
<div class="a" style="left:312px;top:893px;width:12px;height:12px;background:#cdcdcf"></div>
<div class="a" style="left:324px;top:893px;width:12px;height:12px;background:#dcdcde"></div>
<div class="a" style="left:336px;top:893px;width:12px;height:12px;background:#e4e0e4"></div>
<div class="a" style="left:348px;top:893px;width:12px;height:12px;background:#b9bcbf"></div>
<div class="a" style="left:360px;top:893px;width:12px;height:12px;background:#a09d9e"></div>
<div class="a" style="left:372px;top:893px;width:12px;height:12px;background:#c7c6c7"></div>
<div class="a" style="left:384px;top:893px;width:12px;height:12px;background:#d4d6de"></div>
<div class="a" style="left:159px;top:913px;font-size:14px;color:#333">2023-05-07 21:04:52</div>
<div class="a" style="left:435px;top:894px;font-size:13px;color:#666">打印次数:</div>
<div class="a" style="left:501px;top:893px;font-size:15px;color:#222">0次</div>
<div class="a" style="left:542px;top:893px;font-size:15px;color:#222;text-decoration:underline">打印记录</div>
<svg style="left:1601px;top:901px" width="17" height="17" viewBox="0 0 17 17"><circle cx="8.5" cy="8.5" r="7.8" fill="none" stroke="#aaa" stroke-width="1"/><rect x="5" y="6.5" width="7" height="6" rx="0.8" fill="none" stroke="#aaa" stroke-width="0.9"/><path d="M6.8 6.5V5.3a1.7 1.7 0 0 1 3.4 0v1.2" fill="none" stroke="#aaa" stroke-width="0.9"/></svg>
<div class="a" style="left:1621px;top:902px;font-size:14px;color:#222">商品种类:</div>
<div class="a" style="left:1692px;top:902px;font-size:16px;color:#f7874d">2</div>
<div class="a" style="left:1706px;top:903px;font-size:14px;color:#666">种</div>
<div class="a" style="left:1784px;top:889px;width:90px;height:40px;border:1px solid #5b62f5;border-radius:3px;background:#fff"></div>
<div class="a" style="left:1812px;top:901px;font-size:17px;color:#5b62f5">弃审</div>
</body></html>
